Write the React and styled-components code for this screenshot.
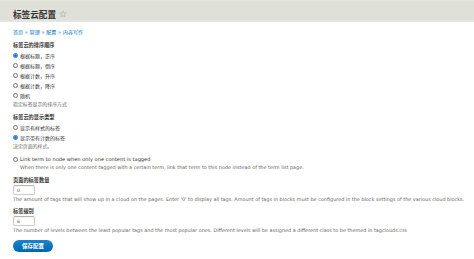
import React from 'react'
import styled, { createGlobalStyle } from 'styled-components'

const GlobalStyle = createGlobalStyle`
    html, body {
        margin: 0;
        padding: 0;
        background: #ffffff;
    }
    body {
        font-family: "DejaVu Sans", "Noto Sans CJK SC", sans-serif;
        color: #333333;
    }
`

const sortOptions = [
    { id: 'title-asc', label: '根据标题，正序', checked: true },
    { id: 'title-desc', label: '根据标题，倒序' },
    { id: 'count-asc', label: '根据计数，升序' },
    { id: 'count-desc', label: '根据计数，降序' },
    { id: 'random', label: '随机' },
]

const displayOptions = [
    { id: 'style', label: '显示有样式的标签' },
    { id: 'count', label: '显示带有计数的标签', checked: true },
]

function RadioGroup({ name, options }) {
    return (
        <RadioList>
            {options.map((opt) => (
                <RadioRow key={opt.id}>
                    <Radio type="radio" name={name} defaultChecked={!!opt.checked} />
                    <span>{opt.label}</span>
                </RadioRow>
            ))}
        </RadioList>
    )
}

function App() {
    return (
        <>
            <GlobalStyle />
            <Header>
                <Title>标签云配置</Title>
                <Star viewBox="0 0 24 24">
                    <path d="M12 2.8l2.75 5.9 6.45.75-4.8 4.4 1.3 6.4L12 17.05 6.3 20.25l1.3-6.4-4.8-4.4 6.45-.75z" />
                </Star>
            </Header>
            <Page>
                <Breadcrumb>
                    <a href="#">首页</a> » <a href="#">管理</a> » <a href="#">配置</a> » <a href="#">内容写作</a>
                </Breadcrumb>

                <FormItem>
                    <Label>标签云的排序顺序</Label>
                    <RadioGroup name="sort" options={sortOptions} />
                    <Description>指定标签显示的排序方式</Description>
                </FormItem>

                <FormItem>
                    <Label>标签云的显示类型</Label>
                    <RadioGroup name="display" options={displayOptions} />
                    <Description>决定页面的样式。</Description>
                </FormItem>

                <FormItem>
                    <CheckRow>
                        <Checkbox type="checkbox" />
                        <span>Link term to node when only one content is tagged</span>
                    </CheckRow>
                    <Description $indent>
                        When there is only one content tagged with a certain term, link that term to this node instead of the term list page.
                    </Description>
                </FormItem>

                <FormItem $gap={6}>
                    <Label>页面的标签数量</Label>
                    <TextInput defaultValue="0" />
                    <Description>
                        The amount of tags that will show up in a cloud on the pages. Enter '0' to display all tags. Amount of tags in blocks must be configured in the block settings of the various cloud blocks.
                    </Description>
                </FormItem>

                <FormItem>
                    <Label>标签级别</Label>
                    <TextInput defaultValue="6" />
                    <Description>
                        The number of levels between the least popular tags and the most popular ones. Different levels will be assigned a different class to be themed in tagclouds.css
                    </Description>
                </FormItem>

                <SaveButton>保存配置</SaveButton>
            </Page>
        </>
    )
}

const Header = styled.header`
    height: 22px;
    box-sizing: border-box;
    padding: 6px 13px 0;
    background: linear-gradient(#e6e6e0 0, #dfe0d8 2px, #dfe0d8 19px, #e7e8e2 22px);
    display: flex;
    align-items: flex-start;
    gap: 3px;
`

const Title = styled.h1`
    margin: 0;
    font-family: "Noto Sans CJK SC", sans-serif;
    font-size: 8.6px;
    line-height: 16px;
    font-weight: 700;
    color: #333333;
`

const Star = styled.svg`
    width: 8px;
    height: 8px;
    margin-top: 4px;
    fill: none;
    stroke: #a5a5a0;
    stroke-width: 1.6;
    stroke-linejoin: round;
`

const Page = styled.main`
    padding: 8px 13px 0;
`

const Breadcrumb = styled.div`
    font-size: 5.1px;
    line-height: 5px;
    color: #0074bd;
    margin-bottom: 7px;
    a {
        color: #0074bd;
        text-decoration: none;
    }
`

const FormItem = styled.div`
    margin-bottom: ${(p) => p.$gap ?? 7}px;
`

const Label = styled.div`
    font-family: "Noto Sans CJK SC", sans-serif;
    font-size: 5.2px;
    line-height: 6px;
    font-weight: 700;
    color: #333333;
    margin-bottom: 2px;
`

const RadioList = styled.div`
    display: flex;
    flex-direction: column;
`

const RadioRow = styled.label`
    height: 10px;
    display: flex;
    align-items: center;
    gap: 2px;
    font-family: "Noto Sans CJK SC", sans-serif;
    font-size: 5px;
    color: #333333;
`

const Radio = styled.input`
    width: 5px;
    height: 5px;
    margin: 0;
    accent-color: #1a73e8;
`

const CheckRow = styled.label`
    height: 6px;
    display: flex;
    align-items: center;
    gap: 2px;
    font-size: 5.1px;
    color: #333333;
`

const Checkbox = styled.input`
    width: 5px;
    height: 5px;
    margin: 0;
`

const Description = styled.div`
    margin-top: ${(p) => (p.$indent ? 3 : 2)}px;
    padding-left: ${(p) => (p.$indent ? 7 : 0)}px;
    font-size: 4.9px;
    line-height: 5px;
    color: #666666;
    white-space: nowrap;
`

const TextInput = styled.input`
    display: block;
    box-sizing: border-box;
    width: 22px;
    height: 10px;
    margin: 0;
    padding: 0 3px;
    border: 0.6px solid #cccccc;
    border-top-color: #b4b4b4;
    border-radius: 2px;
    box-shadow: inset 0 0.5px 1px rgba(0, 0, 0, 0.08);
    font-family: "DejaVu Sans", sans-serif;
    font-size: 4.5px;
    color: #555555;
`

const SaveButton = styled.button`
    display: block;
    width: 40px;
    height: 12px;
    padding: 0;
    border: none;
    border-radius: 8px;
    background: linear-gradient(#1b84cc, #0066ad);
    color: #ffffff;
    font-family: "Noto Sans CJK SC", sans-serif;
    font-size: 5.5px;
    font-weight: 700;
    cursor: pointer;
`

export default App
